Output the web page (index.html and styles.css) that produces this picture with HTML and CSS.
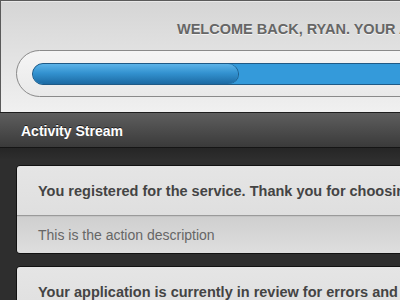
FILE: index.html
```html
<!DOCTYPE html>
<html>
<head>
<meta charset="utf-8">
<link rel="stylesheet" href="styles.css">
</head>
<body>
<div class="page">
  <div class="top">
    <div class="welcome">WELCOME BACK, RYAN. YOUR ACCOUNT IS 40% COMPLETE</div>
    <div class="track">
      <div class="bar">
        <div class="fill" style="width:205px"></div>
      </div>
    </div>
  </div>
  <div class="header">Activity Stream</div>
  <div class="stream">
    <div class="card">
      <div class="card-title">You registered for the service. Thank you for choosing us!</div>
      <div class="card-desc">This is the action description</div>
    </div>
    <div class="card">
      <div class="card-title">Your application is currently in review for errors and issues.</div>
      <div class="card-desc">This is the action description</div>
    </div>
  </div>
</div>
</body>
</html>
```
FILE: styles.css
```css
html, body {
  margin: 0;
  padding: 0;
  background: #2e2e2e;
}
body {
  width: 400px;
  height: 300px;
  overflow: hidden;
  font-family: "Liberation Sans", Arial, sans-serif;
}
.page {
  width: 400px;
  overflow: hidden;
}
.top {
  width: 600px;
  height: 111px;
  border-top: 1px solid #5a5a5a;
  border-left: 1px solid #5a5a5a;
  background: linear-gradient(#d5d5d5, #f0f0f0);
  box-shadow: inset 0 1px 0 #e8e8e8;
  display: flex;
  flex-direction: column;
}
.welcome {
  padding-left: 176px;
  padding-top: 20px;
  height: 29px;
  box-sizing: border-box;
  font-size: 14.5px;
  line-height: 16px;
  font-weight: bold;
  color: #666;
  white-space: nowrap;
  text-shadow: 0 1px 0 #f4f4f4;
}
.track {
  margin-left: 15px;
  margin-top: 20px;
  width: 560px;
  height: 47px;
  box-sizing: border-box;
  border: 1px solid #8a8a8a;
  border-radius: 24px;
  background: linear-gradient(#f5f5f5, #e9e9e9);
  padding: 12px 0 0 15px;
}
.bar {
  width: 520px;
  height: 22px;
  box-sizing: border-box;
  border: 1px solid #1f5a86;
  border-radius: 11px;
  background: #349ada;
  overflow: hidden;
}
.fill {
  height: 20px;
  border-radius: 10px;
  background: linear-gradient(#5cb3e8, #3392d0 45%, #1c6aa3);
  box-shadow: 1px 0 0 #1f5a86;
}
.header {
  height: 34px;
  border-top: 1px solid #1e1e1e;
  border-bottom: 1px solid #151515;
  background: linear-gradient(#5e5e5e, #3a3a3a);
  color: #fff;
  font-size: 14px;
  font-weight: bold;
  line-height: 36px;
  padding-left: 21px;
  text-shadow: 0 -1px 0 #222;
}
.stream {
  background: linear-gradient(#262626, #2e2e2e 12px);
  padding: 17px 0 0 16px;
  display: flex;
  flex-direction: column;
  gap: 12px;
}
.card {
  width: 500px;
  border: 1px solid #121212;
  border-radius: 4px;
  overflow: hidden;
}
.card-title {
  height: 50px;
  box-sizing: border-box;
  background: linear-gradient(#e5e5e5, #dfdfdf);
  padding-left: 21px;
  padding-top: 17px;
  font-size: 14.5px;
  line-height: 16px;
  font-weight: bold;
  color: #444;
  white-space: nowrap;
  border-bottom: 1px solid #9a9a9a;
}
.card-desc {
  height: 37px;
  box-sizing: border-box;
  background: linear-gradient(#cfcfcf, #dedede);
  border-top: 1px solid #c4c4c4;
  padding-left: 21px;
  padding-top: 10px;
  font-size: 14px;
  line-height: 17px;
  color: #666;
  white-space: nowrap;
}
```
